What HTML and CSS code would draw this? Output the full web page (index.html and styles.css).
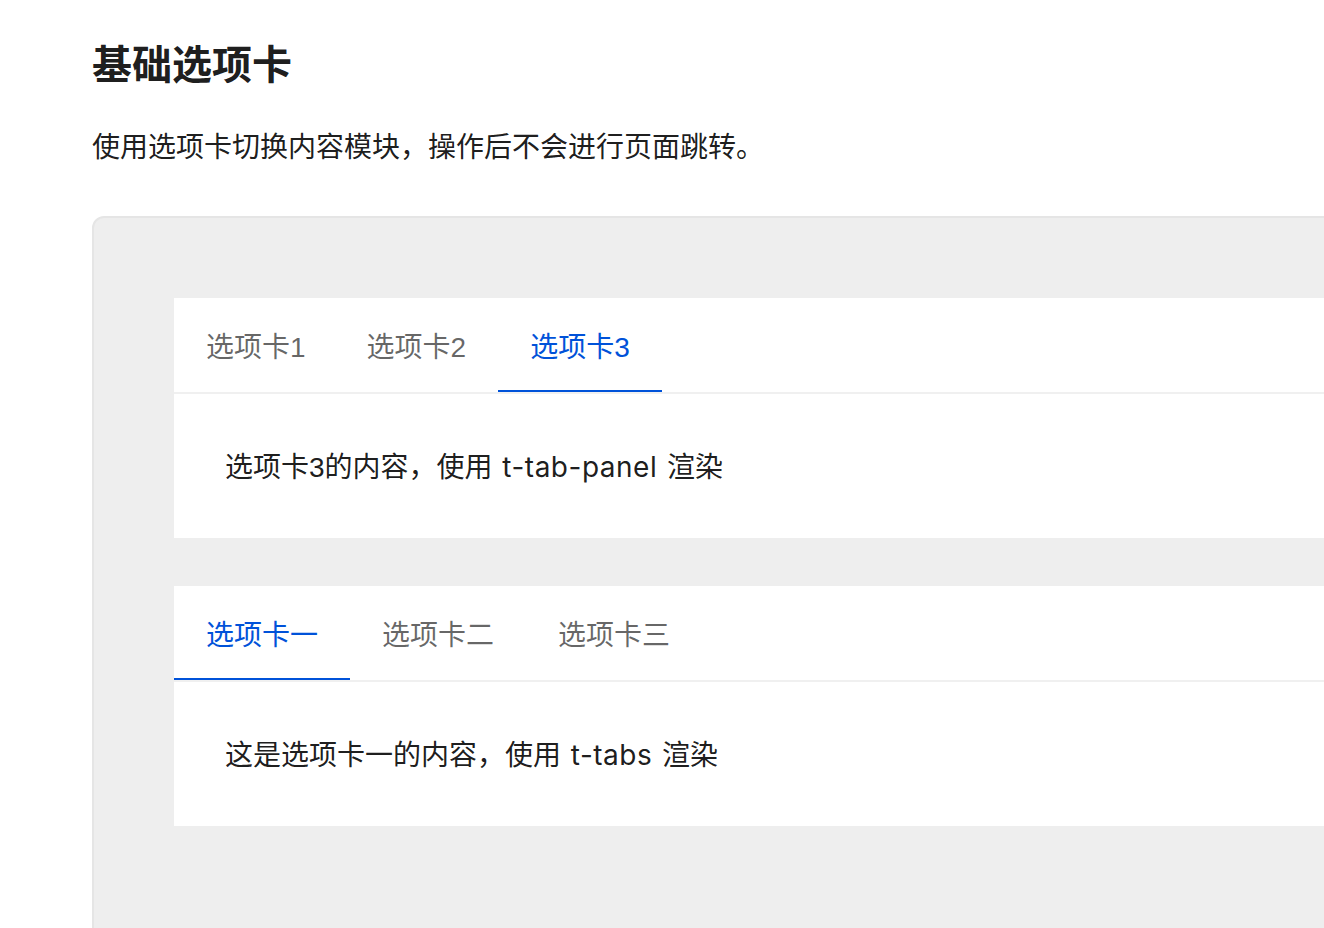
FILE: index.html
```html
<!DOCTYPE html>
<html lang="zh-CN">
<head>
    <meta charset="UTF-8">
    <meta name="viewport" content="width=device-width, initial-scale=1.0">
    <title>基础选项卡</title>
    <link rel="stylesheet" href="styles.css">
</head>
<body>
<div class="page">
  <h1 class="demo-title">基础选项卡</h1>
  <p class="demo-desc">使用选项卡切换内容模块，操作后不会进行页面跳转。</p>

  <div class="demo-box">
    <!-- tabs rendered with t-tab-panel -->
    <div class="tabs tabs-num">
      <div class="tabs-nav">
        <div class="tab-item">选项卡1</div>
        <div class="tab-item">选项卡2</div>
        <div class="tab-item active">选项卡3</div>
      </div>
      <div class="tab-panel">选项卡3的内容，使用 <span class="code-name">t-tab-panel</span> 渲染</div>
    </div>

    <!-- tabs rendered with t-tabs list -->
    <div class="tabs">
      <div class="tabs-nav">
        <div class="tab-item active">选项卡一</div>
        <div class="tab-item">选项卡二</div>
        <div class="tab-item">选项卡三</div>
      </div>
      <div class="tab-panel">这是选项卡一的内容，使用 <span class="code-name">t-tabs</span> 渲染</div>
    </div>
  </div>
</div>
</body>
</html>
```

FILE: styles.css
```css
html, body {
    margin: 0;
    padding: 0;
    overflow: hidden;
    background: #fff;
}
body {
    font-family: "Liberation Sans", "Noto Sans CJK SC", sans-serif;
    color: rgba(0, 0, 0, 0.9);
}
.page {
    width: 1500px;
    padding: 37px 0 0 92px;
}
.demo-title {
    margin: 0;
    font-size: 40px;
    line-height: 56px;
    font-weight: 700;
    height: 56px;
}
.demo-desc {
    margin: 33px 0 46px;
    font-size: 28px;
    line-height: 44px;
}
.demo-box {
    background-color: #eeeeee;
    border: 2px solid #e5e5e5;
    border-radius: 12px;
    padding: 80px 0 200px 80px;
    display: flex;
    flex-direction: column;
    gap: 48px;
}
.tabs {
    background-color: #fff;
}
.tabs-nav {
    display: flex;
    border-bottom: 2px solid #f0f0f0;
}
.tab-item {
    box-sizing: border-box;
    height: 94px;
    padding: 0 32px;
    display: flex;
    align-items: center;
    font-size: 28px;
    color: rgba(0, 0, 0, 0.6);
    border-bottom: 2px solid transparent;
    padding-top: 2px;
    cursor: pointer;
}
/* digit "1" is narrower in the original font */
.tabs-num .tab-item:first-child {
    padding-right: 29px;
}
.tab-item.active {
    color: #0052d9;
    border-bottom-color: #0052d9;
}
.tab-panel {
    height: 144px;
    box-sizing: border-box;
    padding: 51px 51px 49px;
    font-size: 28px;
    line-height: 44px;
    word-spacing: 2px;
}
.code-name {
    font-family: "Inter", "Liberation Sans", sans-serif;
    letter-spacing: 0.5px;
}
```
